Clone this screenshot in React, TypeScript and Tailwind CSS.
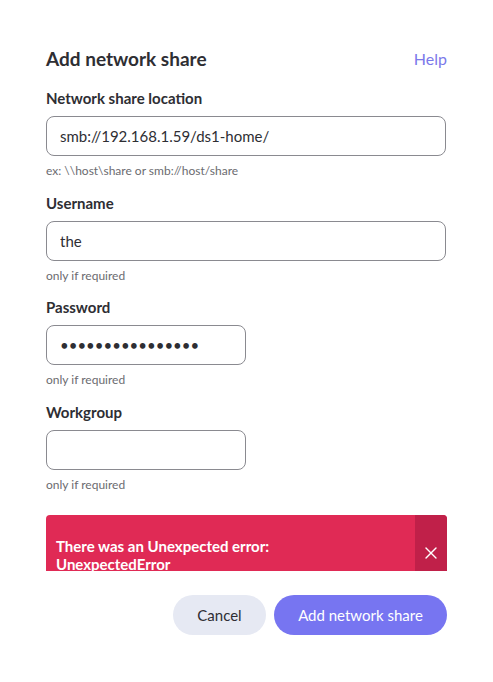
import { X } from 'lucide-react'

type Field = {
  label: string
  value: string
  type?: string
  wide?: boolean
  hint: string
}

const fields: Field[] = [
  { label: 'Network share location', value: 'smb://192.168.1.59/ds1-home/', wide: true, hint: 'ex: \\\\host\\share or smb://host/share' },
  { label: 'Username', value: 'the', wide: true, hint: 'only if required' },
  { label: 'Password', value: 'secretpassword12', type: 'password', hint: 'only if required' },
  { label: 'Workgroup', value: '', hint: 'only if required' },
]

export default function App() {
  return (
    <div className="min-h-[682px] w-[493px] bg-white text-[#2e2e33]" style={{ fontFamily: 'Lato, "Noto Sans", sans-serif' }}>
      <div className="px-[46px] pt-[46px] pb-[46px] w-[493px]">
        <div className="flex items-center justify-between h-[26px]">
          <h2 className="text-[19px] font-bold leading-[26px] text-[#2e2e33]">Add network share</h2>
          <a className="text-[16px] leading-[26px] text-[#7b79ea]">Help</a>
        </div>

        <form className="mt-[16px] flex flex-col">
          {fields.map((f, i) => (
            <div key={f.label} className={i === 0 ? '' : 'mt-[13.67px]'}>
              <label className="block text-[15px] font-bold leading-[20px] text-[#2e2e33]">{f.label}</label>
              <input
                type={f.type ?? 'text'}
                defaultValue={f.value}
                className={`mt-[8px] block h-[40px] rounded-[8px] border border-[#8a8a90] bg-white px-[13px] text-[15px] text-[#2e2e33] outline-none ${f.wide ? 'w-[400px]' : 'w-[200px]'}`}
                style={{ fontFamily: 'Lato, "Noto Sans", sans-serif' }}
              />
              <p className="mt-[7px] text-[12px] leading-[16px] text-[#6b6b70]">{f.hint}</p>
            </div>
          ))}
        </form>

        <div className="mt-[22px] flex h-[56px] overflow-hidden rounded-t-[4px] bg-[#e02a55]">
          <p className="flex-1 pl-[10px] pt-[22px] text-[15px] font-bold leading-[18px] text-white">
            There was an Unexpected error:
            <br />
            UnexpectedError
          </p>
          <button type="button" className="flex w-[32px] items-start justify-center bg-[#c02049] pt-[28px] text-white">
            <X size={20} strokeWidth={1.6} />
          </button>
        </div>

        <div className="mt-[24px] flex justify-end gap-[8px]">
          <button type="button" className="h-[40px] w-[93px] rounded-full bg-[#e6e9f3] text-[15px] text-[#2e2e33]">
            Cancel
          </button>
          <button type="button" className="h-[40px] w-[173px] rounded-full bg-[#7775f1] text-[15px] text-white">
            Add network share
          </button>
        </div>
      </div>
    </div>
  )
}
